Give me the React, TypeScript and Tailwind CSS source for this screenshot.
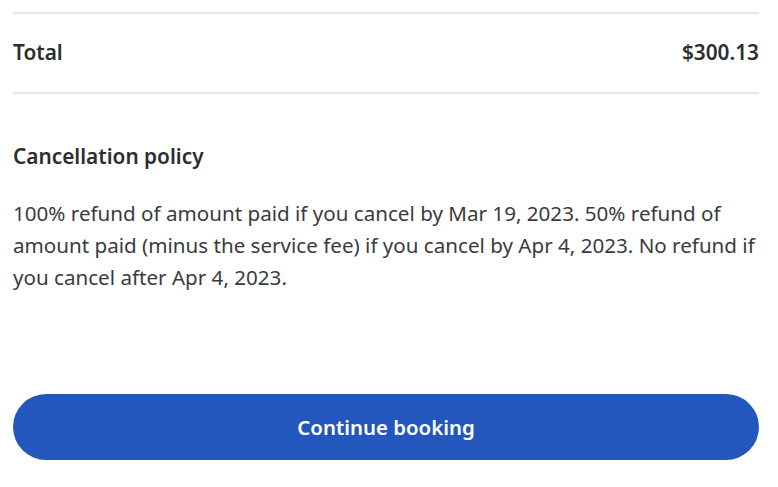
export default function App() {
  return (
    <div className="w-[778px] h-[487px] bg-white overflow-hidden text-[#2c2e2f]" style={{ fontFamily: '"Noto Sans", "Open Sans", sans-serif' }}>
      <div className="px-[13px] pr-[19px] pt-[12px]">
        <div className="border-t-2 border-[#e6e6e6]" />
        <div className="flex justify-between items-center h-[78px]">
          <span className="text-[20.8px] font-semibold">Total</span>
          <span className="text-[20.8px] font-semibold">$300.13</span>
        </div>
        <div className="border-t-2 border-[#e6e6e6]" />
        <div className="pt-[46px]">
          <div className="text-[20.8px] font-semibold leading-[32px]">Cancellation policy</div>
          <p className="mt-[25px] text-[20.6px] leading-[32px] text-[#3a3b3c]">
            100% refund of amount paid if you cancel by Mar 19, 2023. 50% refund of amount paid (minus the service fee) if you cancel by Apr 4, 2023. No refund if you cancel after Apr 4, 2023.
          </p>
        </div>
        <button className="mt-[101px] w-full h-[66px] rounded-full bg-[#2457bd] text-white text-[20.4px] font-semibold">
          Continue booking
        </button>
      </div>
    </div>
  )
}
